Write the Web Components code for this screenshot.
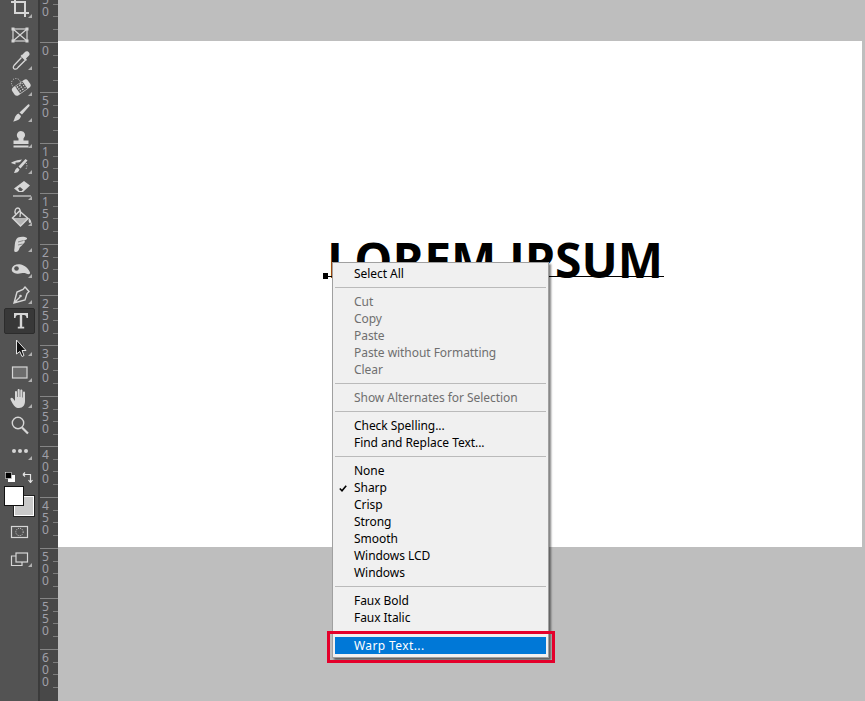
<!DOCTYPE html>
<html>
<head>
<meta charset="utf-8">
<style>
html, body { margin: 0; padding: 0; height: 100%; overflow: hidden; background: #bebebe; }
</style>
</head>
<body>
<ps-app></ps-app>
<script>
class PsTool extends HTMLElement {
    constructor() {
        super()
        this.attachShadow({mode: 'open'}).innerHTML = `
        <style>
        :host { display: block; position: relative; width: 38px; height: 26px; }
        :host([active])::before {
            content: ''; position: absolute; left: 4px; top: 0; width: 29px; height: 24px;
            background: #383838; border: 1px solid #2c2c2c; border-radius: 2px;
        }
        .box { position: relative; display: block; width: 38px; height: 26px; }
        .corner {
            display: none; position: absolute; right: 6px; bottom: 4px; width: 0; height: 0;
            border-left: 4px solid transparent; border-bottom: 4px solid #b0b0b0;
        }
        :host([corner]) .corner { display: block; }
        ::slotted(svg) { display: block; width: 38px; height: 26px; }
        </style>
        <div class="box"><slot></slot><i class="corner"></i></div>
        `
    }
}

class PsToolbar extends HTMLElement {
    constructor() {
        super()
        const s = 'fill="none" stroke="#d6d6d6"'
        const f = 'fill="#d6d6d6"'
        this.attachShadow({mode: 'open'}).innerHTML = `
        <style>
        :host {
            display: flex; flex-direction: column; flex: none; width: 38px; height: 100%;
            background: #535353; border-right: 2px solid #3b3b3b; overflow: hidden;
        }
        .tools { margin-top: -4px; }
        .swatches { height: 55px; }
        .mini { display: flex; align-items: flex-start; gap: 7px; padding: 8px 0 0 5px; height: 12px; }
        .mini svg { display: block; }
        .colors { position: relative; width: 38px; height: 30px; margin-top: 2px; }
        .fg, .bg { position: absolute; box-sizing: border-box; width: 20px; height: 20px; }
        .fg { left: 4px; top: 0; background: #fff; border: 1px solid #111; z-index: 1; }
        .bg { left: 14px; top: 10px; background: #c9c9c9; border: 1px solid #fff; box-shadow: 0 0 0 1px #222; }
        </style>
        <div class="tools">
        <ps-tool corner><svg viewBox="0 0 38 26" ${s} stroke-width="2"><path d="M15 2V17H29M11 6H25V21"/></svg></ps-tool>
        <ps-tool><svg viewBox="0 0 38 26" ${s} stroke-width="1.2"><rect x="13" y="7" width="14" height="12"/><path d="M13 7L27 19M27 7L13 19"/><path stroke-width="3" d="M11.5 7H14.5M25.5 7H28.5M11.5 19H14.5M25.5 19H28.5"/></svg></ps-tool>
        <ps-tool corner><svg viewBox="0 0 38 26"><path ${f} d="M22 7L25 4C26 3 28 3 29 4.500C30 6 29.500 7 29 7.500L26 10.500L27 12L25.500 13L20.500 8L22 6.500Z"/><path ${s} stroke-width="1.3" d="M21.500 9.500L14 17.500C13 19 13 21 14.500 21C16 21.500 17.500 20.500 18 19.500L25 12.500"/></svg></ps-tool>
        <ps-tool corner><svg viewBox="0 0 38 26"><g transform="rotate(-35 21 14)"><rect ${f} x="12" y="9" width="19" height="9.500" rx="3"/><rect x="17" y="9.500" width="9" height="8.500" fill="#555"/><path stroke="#d6d6d6" stroke-width="1.200" stroke-dasharray="1.500 1.500" d="M18 11H25M18 13.500H25M18 16H25"/></g><circle cx="16" cy="9" r="4.500" fill="none" stroke="#d6d6d6" stroke-dasharray="1 1.500"/></svg></ps-tool>
        <ps-tool corner><svg viewBox="0 0 38 26"><path ${f} d="M28 4.500C29 4 30 5 29.500 6L22 14.500L19.500 12.500ZM18.500 13.500L21 16C20.500 19 17.500 21 13 21.500C15 20 14 15.500 18.500 13.500Z"/></svg></ps-tool>
        <ps-tool corner><svg viewBox="0 0 38 26"><path ${f} d="M21 5A4.200 4.200 0 0 1 23.500 12.500L23.500 14.500H28.500V18H13.500V14.500H18.500L18.500 12.500A4.200 4.200 0 0 1 21 5Z"/><path ${f} d="M13.500 19.500H28.500V21.500H13.500Z"/></svg></ps-tool>
        <ps-tool corner><svg viewBox="0 0 38 26"><path ${f} d="M25.500 7L27.500 8.500L20.500 16.500L18.500 14.500ZM17.500 15.500L19.500 17.500C19 20 16.500 21 14 21C15 19 15 17 17.500 15.500Z"/><path ${f} d="M11 11C13 9 18 8 22 7.500L20 10L18 10.500L15.500 10.500L15.500 12.500C14 12 12.500 11.500 11 11Z"/><path fill="none" stroke="#d6d6d6" stroke-dasharray="1 1.500" d="M26 11C27.500 13 27 15 26 17"/></svg></ps-tool>
        <ps-tool corner><svg viewBox="0 0 38 26"><path ${f} d="M24 3L30 7.500L23 14H18.500L14 10.500Z"/><path fill="#535353" d="M18 10.500L20 9L23 11.500L21.500 13H19.500Z"/><path ${s} stroke-width="1.200" d="M13 18H31"/></svg></ps-tool>
        <ps-tool corner><svg viewBox="0 0 38 26"><path ${s} stroke-width="1.500" d="M19.500 7L28 14.500L20.500 22L12.500 14Z"/><path ${f} d="M12.500 14H28L20.500 22Z" opacity=".75"/><path ${s} stroke-width="1.300" d="M15.500 10C14 6 16 4 18 4C20 4 21 7 20 13"/><path ${f} d="M29 14C31 16 32 18 30.500 19C29 19.500 28 17 29 14Z"/></svg></ps-tool>
        <ps-tool corner><svg viewBox="0 0 38 26"><path ${f} d="M18 7.500C21 6.500 25 6.500 27 8C27.500 9 26 10 24 10.500C25.500 11 25 13 23 14C22 16 20 16.500 19.500 18C19 20 18 22 15.500 22C14 22 14 20.500 14.500 18C15 15 14.500 10 18 7.500Z"/><path d="M18 12L23.500 10.500M18 15L22.500 14" stroke="#535353" stroke-width=".6"/></svg></ps-tool>
        <ps-tool corner><svg viewBox="0 0 38 26"><path ${f} d="M12 12C13 9 17 7.500 21 8.500C25 9.500 29 13 30 16.500C30.500 18.500 28 18.500 26 17.500C23 16 20 18.500 16 17.500C13 17 11 15 12 12Z"/><circle cx="16.500" cy="12.500" r="2.300" fill="#535353"/></svg></ps-tool>
        <ps-tool corner><svg viewBox="0 0 38 26"><path ${s} stroke-width="1.400" d="M25 5L29 9.500L27 11.500L25 18L14 21L17 10L23 7.500ZM14.500 20.500L20 15"/><circle cx="20.500" cy="14" r="1.300" ${f}/></svg></ps-tool>
        <ps-tool active><svg viewBox="0 0 38 26"><path ${f} d="M14 5H28V10H26.500C26.500 8 25.500 7 24 7H22.200V18.800H24.200V20.500H17.800V18.800H19.800V7H18C16.500 7 15.500 8 15.500 10H14Z"/></svg></ps-tool>
        <ps-tool corner><svg viewBox="0 0 38 26"><path fill="#111" stroke="#e4e4e4" stroke-width="1" d="M16.500 6V20L19.800 17.500L22 22.500L24 21.500L22 16.500H26Z"/></svg></ps-tool>
        <ps-tool corner><svg viewBox="0 0 38 26"><rect x="12.500" y="7" width="14.500" height="11" fill="#6d6d6d" stroke="#d6d6d6" stroke-width="1.200"/></svg></ps-tool>
        <ps-tool corner><svg viewBox="0 0 38 26"><path ${f} d="M15 12V6C15 4.500 17 4.500 17 6V11H17.600V4C17.600 2.500 19.700 2.500 19.700 4V11H20.300V4.500C20.300 3 22.400 3 22.400 4.500V11.500H23V6.500C23 5 25 5 25 6.500V15C25 19 23 22 19 22C15.500 22 14 20 12 16.500L10.500 13.500C10 12 12 11 13 12.500L15 15Z"/></svg></ps-tool>
        <ps-tool><svg viewBox="0 0 38 26"><circle cx="18" cy="11" r="5.700" fill="none" stroke="#d6d6d6" stroke-width="1.400"/><path d="M22 15.500L28 21.500" stroke="#d6d6d6" stroke-width="2.200"/></svg></ps-tool>
        <ps-tool corner><svg viewBox="0 0 38 26"><circle cx="14" cy="13" r="2" ${f}/><circle cx="20" cy="13" r="2" ${f}/><circle cx="26" cy="13" r="2" ${f}/></svg></ps-tool>
        </div>
        <div class="swatches">
            <div class="mini">
                <svg width="10" height="10" viewBox="0 0 10 10"><rect x="3.500" y="3.500" width="6" height="6" fill="#fff" stroke="#fff"/><rect x=".5" y=".5" width="6" height="6" fill="#000" stroke="#ddd" stroke-width=".6"/></svg>
                <svg width="11" height="11" viewBox="0 0 11 11" fill="none" stroke="#e4e4e4" stroke-width="1.200"><path d="M1 2.500H8.500V10M1 2.500L3 .5M1 2.500L3 4.500M6.500 8L8.500 10.500L10.500 8"/></svg>
            </div>
            <div class="colors"><div class="fg"></div><div class="bg"></div></div>
        </div>
        <ps-tool><svg viewBox="0 0 38 26"><rect x="11.500" y="7.500" width="16" height="11" fill="none" stroke="#d6d6d6" stroke-width="1.200"/><circle cx="19.500" cy="13" r="3.700" fill="none" stroke="#d6d6d6" stroke-dasharray="1 1.200"/></svg></ps-tool>
        <ps-tool corner><svg viewBox="0 0 38 26"><rect x="16" y="8" width="11.500" height="9" fill="none" stroke="#d6d6d6" stroke-width="1.200"/><path fill="none" stroke="#d6d6d6" stroke-width="1.200" d="M16 11H11.500V20.500H22V17"/></svg></ps-tool>
        `
    }
}

class PsRuler extends HTMLElement {
    constructor() {
        super()
        let segs = ''
        for (const n of [50, 0, 50, 100, 150, 200, 250, 300, 350, 400, 450, 500, 550, 600]) {
            const digits = String(n).split('').map(d => `<span>${d}</span>`).join('')
            segs += `<div class="seg">${digits}</div>`
        }
        this.attachShadow({mode: 'open'}).innerHTML = `
        <style>
        :host {
            display: block; flex: none; width: 18px; height: 100%; overflow: hidden;
            background: #484848;
        }
        .segs { margin-top: -9px; }
        .seg {
            box-sizing: border-box; height: 50.6px; padding: 2px 0 0;
            border-top: 1px solid #858585;
            background: repeating-linear-gradient(to bottom, transparent 0, transparent 11.65px, #7d7d7d 11.65px, #7d7d7d 12.65px) right top / 5px 100% no-repeat;
            font: 12px/12px "Noto Sans", sans-serif; color: #a0a0a8;
        }
        .seg span { display: block; width: 11px; text-align: center; }
        </style>
        <div class="segs">${segs}</div>
        `
    }
}

class PsMenuItem extends HTMLElement {
    constructor() {
        super()
        this.attachShadow({mode: 'open'}).innerHTML = `
        <style>
        :host {
            display: block; position: relative; height: 17px; margin: 0 2px; padding-left: 19px;
            font: 12px/17px "Noto Sans", sans-serif; color: #000; white-space: nowrap;
            letter-spacing: -.05px;
        }
        :host([disabled]) { color: #6f6f6f; }
        :host([active]) { background: #0078d7; color: #fff; letter-spacing: .4px; }
        svg { display: none; position: absolute; left: 4px; top: 6px; }
        :host([checked]) svg { display: block; }
        </style>
        <svg width="8" height="7" viewBox="0 0 8 7"><path d="M.8 3.500L3 5.800L7.200 .8" fill="none" stroke="#000" stroke-width="1.600"/></svg>
        <slot></slot>
        `
    }
}

class PsMenuSep extends HTMLElement {
    constructor() {
        super()
        this.attachShadow({mode: 'open'}).innerHTML = `
        <style>
        :host { display: block; height: 1px; margin: 5px 2px; background: #bababa; }
        </style>
        `
    }
}

class PsMenu extends HTMLElement {
    constructor() {
        super()
        this.attachShadow({mode: 'open'}).innerHTML = `
        <style>
        :host {
            display: block; position: absolute; left: 274px; top: 262px; width: 215px;
            padding: 2px 0 3px; background: #f0f0f0; border: 1px solid #a0a0a0;
            box-shadow: 2px 2px 2px rgba(0,0,0,.5);
        }
        .frame {
            position: absolute; left: -6px; right: -7px; bottom: -6px; height: 26px;
            border: 3px solid #e4002b;
        }
        </style>
        <slot></slot>
        <div class="frame"></div>
        `
    }
}

class PsCanvas extends HTMLElement {
    constructor() {
        super()
        this.attachShadow({mode: 'open'}).innerHTML = `
        <style>
        :host {
            display: block; position: relative; flex: 1; height: 100%; overflow: hidden;
            background: #bebebe; padding-top: 41px; box-sizing: border-box;
        }
        .page {
            box-sizing: border-box; height: 506px; margin-right: 3px; background: #fff;
            padding: 190px 0 0 269px;
        }
        .line {
            position: relative; width: 337px; height: 45px; border-bottom: 1px solid #000;
            font: bold 48px/57px "Open Sans", sans-serif; color: #000; white-space: nowrap;
            text-indent: 0; letter-spacing: .05px;
        }
        .line i {
            position: absolute; left: -4px; bottom: -3px; width: 5px; height: 6px; background: #000;
        }
        </style>
        <div class="page"><div class="line">LOREM IPSUM<i></i></div></div>
        <ps-menu>
            <ps-menu-item>Select All</ps-menu-item>
            <ps-menu-sep></ps-menu-sep>
            <ps-menu-item disabled>Cut</ps-menu-item>
            <ps-menu-item disabled>Copy</ps-menu-item>
            <ps-menu-item disabled>Paste</ps-menu-item>
            <ps-menu-item disabled>Paste without Formatting</ps-menu-item>
            <ps-menu-item disabled>Clear</ps-menu-item>
            <ps-menu-sep></ps-menu-sep>
            <ps-menu-item disabled>Show Alternates for Selection</ps-menu-item>
            <ps-menu-sep></ps-menu-sep>
            <ps-menu-item>Check Spelling...</ps-menu-item>
            <ps-menu-item>Find and Replace Text...</ps-menu-item>
            <ps-menu-sep></ps-menu-sep>
            <ps-menu-item>None</ps-menu-item>
            <ps-menu-item checked>Sharp</ps-menu-item>
            <ps-menu-item>Crisp</ps-menu-item>
            <ps-menu-item>Strong</ps-menu-item>
            <ps-menu-item>Smooth</ps-menu-item>
            <ps-menu-item>Windows LCD</ps-menu-item>
            <ps-menu-item>Windows</ps-menu-item>
            <ps-menu-sep></ps-menu-sep>
            <ps-menu-item>Faux Bold</ps-menu-item>
            <ps-menu-item>Faux Italic</ps-menu-item>
            <ps-menu-sep></ps-menu-sep>
            <ps-menu-item active>Warp Text...</ps-menu-item>
        </ps-menu>
        `
    }
}

class PsApp extends HTMLElement {
    constructor() {
        super()
        this.attachShadow({mode: 'open'}).innerHTML = `
        <style>
        :host { display: flex; width: 865px; height: 701px; overflow: hidden; }
        </style>
        <ps-toolbar></ps-toolbar>
        <ps-ruler></ps-ruler>
        <ps-canvas></ps-canvas>
        `
    }
}

customElements.define('ps-tool', PsTool)
customElements.define('ps-toolbar', PsToolbar)
customElements.define('ps-ruler', PsRuler)
customElements.define('ps-menu-item', PsMenuItem)
customElements.define('ps-menu-sep', PsMenuSep)
customElements.define('ps-menu', PsMenu)
customElements.define('ps-canvas', PsCanvas)
customElements.define('ps-app', PsApp)
</script>
</body>
</html>
